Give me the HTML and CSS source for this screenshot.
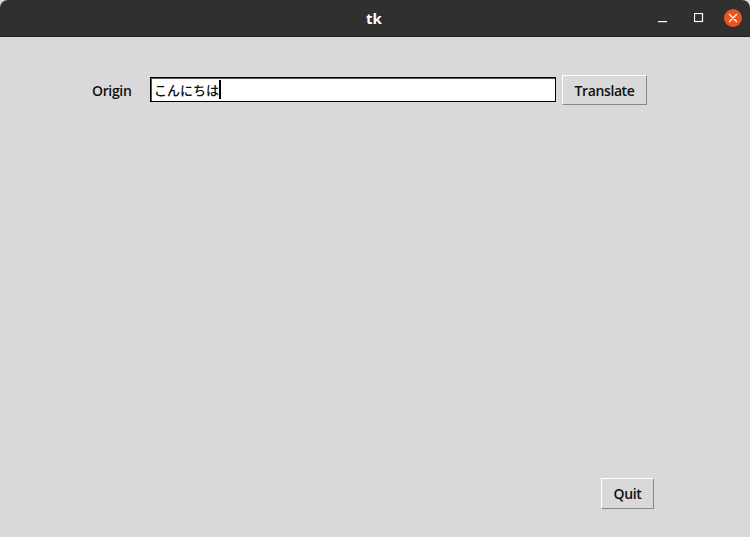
FILE: index.html
```html
<!DOCTYPE html>
<html lang="ja">
<head>
<meta charset="utf-8">
<title>tk</title>
<link rel="stylesheet" href="styles.css">
</head>
<body>
<div class="window">
  <header class="titlebar">
    <span class="title">tk</span>
    <div class="controls">
      <span class="ctl min"><svg width="10" height="10" viewBox="0 0 10 10"><rect x="0" y="8" width="9" height="1.2" fill="#ffffff"/></svg></span>
      <span class="ctl max"><svg width="10" height="10" viewBox="0 0 10 10"><rect x="0.5" y="0.5" width="8" height="8" fill="none" stroke="#ffffff" stroke-width="1.2"/></svg></span>
      <span class="ctl close"><svg width="18" height="18" viewBox="0 0 18 18"><circle cx="9" cy="9" r="9" fill="#e95420"/><path d="M5.5 5.5 L12.5 12.5 M12.5 5.5 L5.5 12.5" stroke="#ffffff" stroke-width="1.4" stroke-linecap="round"/></svg></span>
    </div>
  </header>
  <main class="content">
    <div class="row">
      <label class="label">Origin</label>
      <div class="entry"><span class="entry-text">こんにちは</span><span class="caret"></span></div>
      <button class="btn translate">Translate</button>
    </div>
    <div class="footer">
      <button class="btn quit">Quit</button>
    </div>
  </main>
</div>
</body>
</html>
```
FILE: styles.css
```css
* { box-sizing: border-box; }
html, body { margin: 0; padding: 0; }
body {
  width: 750px;
  height: 537px;
  background: #d9d9d9;
  font-family: "Open Sans", "Noto Sans CJK JP", sans-serif;
  overflow: hidden;
}
.window {
  width: 750px;
  height: 537px;
  display: flex;
  flex-direction: column;
  background: #d9d9d9;
}
.titlebar {
  height: 37px;
  flex: 0 0 37px;
  background: #303030;
  border-radius: 8px 8px 0 0;
  border-bottom: 1px solid #1f1f1f;
  position: relative;
  display: flex;
  align-items: center;
  justify-content: center;
}
.title {
  color: #ffffff;
  font-weight: 700;
  font-size: 15px;
  font-family: "Noto Sans", sans-serif;
  margin-left: -2px;
}
.controls {
  position: absolute;
  right: 8px;
  top: 0;
  height: 36px;
  display: flex;
  align-items: center;
  gap: 0;
}
.ctl { display: flex; align-items: center; justify-content: center; }
.ctl.min { width: 10px; margin-right: 26px; }
.ctl.max { width: 10px; margin-right: 20px; }
.ctl.close { width: 18px; }
.content {
  flex: 1;
  display: flex;
  flex-direction: column;
}
.row {
  display: flex;
  align-items: center;
  padding-top: 38px;
  padding-left: 92px;
}
.label {
  font-size: 14px;
  letter-spacing: -0.35px;
  font-weight: 600;
  color: #111;
  width: 58px;
}
.entry {
  width: 406px;
  height: 25px;
  background: #ffffff;
  border: 1px solid #000;
  box-shadow: inset 1px 1px 0 #555;
  display: flex;
  align-items: center;
  padding-left: 3px;
  margin-right: 6px;
  margin-top: -1px;
}
.entry-text {
  font-family: "Noto Sans CJK JP", sans-serif;
  font-size: 13px;
  font-weight: 500;
  color: #111;
  line-height: 1;
}
.caret {
  display: inline-block;
  width: 2px;
  height: 19px;
  background: #000;
}
.btn {
  font-family: "Open Sans", sans-serif;
  font-size: 14px;
  letter-spacing: -0.4px;
  font-weight: 600;
  color: #111;
  background: #d9d9d9;
  border: 1px solid;
  border-color: #ffffff #888888 #888888 #ffffff;
  padding: 0;
  margin: 0;
}
.translate { width: 85px; height: 30px; }
.footer {
  margin-top: auto;
  display: flex;
  justify-content: flex-end;
  padding-right: 96px;
  padding-bottom: 28px;
}
.quit { width: 53px; height: 31px; }
```
